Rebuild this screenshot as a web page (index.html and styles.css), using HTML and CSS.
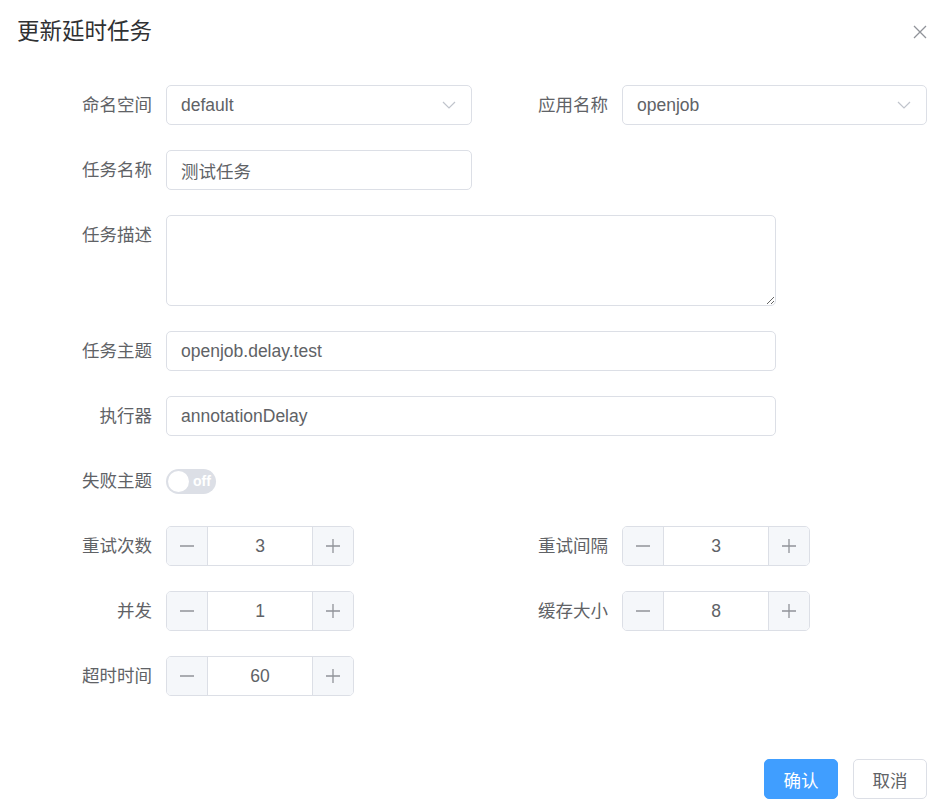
FILE: index.html
```html
<!DOCTYPE html>
<html lang="zh-CN">
<head>
<meta charset="utf-8">
<title>更新延时任务</title>
<link rel="stylesheet" href="styles.css">
</head>
<body>
<div class="dialog">
  <div class="dialog-header">
    <span class="dialog-title">更新延时任务</span>
    <button class="close-btn" aria-label="close">
      <svg width="14" height="14" viewBox="0 0 14 14"><path d="M1 1L13 13M13 1L1 13" stroke="#909399" stroke-width="1.3" fill="none"/></svg>
    </button>
  </div>
  <div class="dialog-body">
    <form class="form">
      <div class="form-item">
        <label class="label">命名空间</label>
        <div class="control select">
          <span class="value">default</span>
          <svg class="arrow" width="14" height="8" viewBox="0 0 14 8"><path d="M1 1L7 7L13 1" stroke="#c0c4cc" stroke-width="1.2" fill="none"/></svg>
        </div>
      </div>
      <div class="form-item">
        <label class="label">应用名称</label>
        <div class="control select">
          <span class="value">openjob</span>
          <svg class="arrow" width="14" height="8" viewBox="0 0 14 8"><path d="M1 1L7 7L13 1" stroke="#c0c4cc" stroke-width="1.2" fill="none"/></svg>
        </div>
      </div>

      <div class="form-item">
        <label class="label">任务名称</label>
        <div class="control"><span class="value">测试任务</span></div>
      </div>
      <div class="spacer"></div>

      <div class="form-item wide">
        <label class="label">任务描述</label>
        <textarea class="textarea"></textarea>
      </div>

      <div class="form-item wide">
        <label class="label">任务主题</label>
        <div class="control long"><span class="value">openjob.delay.test</span></div>
      </div>

      <div class="form-item wide">
        <label class="label">执行器</label>
        <div class="control long"><span class="value">annotationDelay</span></div>
      </div>

      <div class="form-item wide">
        <label class="label">失败主题</label>
        <div class="switch-wrap">
          <span class="switch"><span class="knob"></span><span class="switch-text">off</span></span>
        </div>
      </div>

      <div class="form-item">
        <label class="label">重试次数</label>
        <div class="number">
          <span class="num-btn dec"><svg width="14" height="2" viewBox="0 0 14 2"><path d="M0 1H14" stroke="#909399" stroke-width="1.3"/></svg></span>
          <span class="num-val">3</span>
          <span class="num-btn inc"><svg width="14" height="14" viewBox="0 0 14 14"><path d="M0 7H14M7 0V14" stroke="#909399" stroke-width="1.3"/></svg></span>
        </div>
      </div>
      <div class="form-item">
        <label class="label">重试间隔</label>
        <div class="number">
          <span class="num-btn dec"><svg width="14" height="2" viewBox="0 0 14 2"><path d="M0 1H14" stroke="#909399" stroke-width="1.3"/></svg></span>
          <span class="num-val">3</span>
          <span class="num-btn inc"><svg width="14" height="14" viewBox="0 0 14 14"><path d="M0 7H14M7 0V14" stroke="#909399" stroke-width="1.3"/></svg></span>
        </div>
      </div>

      <div class="form-item">
        <label class="label">并发</label>
        <div class="number">
          <span class="num-btn dec"><svg width="14" height="2" viewBox="0 0 14 2"><path d="M0 1H14" stroke="#909399" stroke-width="1.3"/></svg></span>
          <span class="num-val">1</span>
          <span class="num-btn inc"><svg width="14" height="14" viewBox="0 0 14 14"><path d="M0 7H14M7 0V14" stroke="#909399" stroke-width="1.3"/></svg></span>
        </div>
      </div>
      <div class="form-item">
        <label class="label">缓存大小</label>
        <div class="number">
          <span class="num-btn dec"><svg width="14" height="2" viewBox="0 0 14 2"><path d="M0 1H14" stroke="#909399" stroke-width="1.3"/></svg></span>
          <span class="num-val">8</span>
          <span class="num-btn inc"><svg width="14" height="14" viewBox="0 0 14 14"><path d="M0 7H14M7 0V14" stroke="#909399" stroke-width="1.3"/></svg></span>
        </div>
      </div>

      <div class="form-item last">
        <label class="label">超时时间</label>
        <div class="number">
          <span class="num-btn dec"><svg width="14" height="2" viewBox="0 0 14 2"><path d="M0 1H14" stroke="#909399" stroke-width="1.3"/></svg></span>
          <span class="num-val">60</span>
          <span class="num-btn inc"><svg width="14" height="14" viewBox="0 0 14 14"><path d="M0 7H14M7 0V14" stroke="#909399" stroke-width="1.3"/></svg></span>
        </div>
      </div>
    </form>
  </div>
  <div class="dialog-footer">
    <button class="btn primary">确认</button>
    <button class="btn">取消</button>
  </div>
</div>
</body>
</html>
```

FILE: styles.css
```css
* { box-sizing: border-box; }
html, body {
  margin: 0;
  padding: 0;
  background: #ffffff;
}
body {
  font-family: "Liberation Sans", "Noto Sans CJK SC", sans-serif;
  color: #606266;
}
.dialog {
  width: 943px;
  height: 810px;
  background: #fff;
}
.dialog-header {
  display: flex;
  justify-content: space-between;
  align-items: center;
  padding: 20px 16px 0 17px;
  height: 44px;
}
.dialog-title {
  font-size: 22.5px;
  line-height: 24px;
  color: #303133;
}
.close-btn {
  border: none;
  background: none;
  padding: 0;
  width: 14px;
  height: 14px;
  display: flex;
  cursor: pointer;
}
.dialog-body {
  padding: 41px 16px 0 41px;
}
.form {
  display: grid;
  grid-template-columns: 431px 430px;
  column-gap: 25px;
  row-gap: 25px;
}
.form-item {
  display: flex;
  align-items: flex-start;
}
.form-item.wide {
  grid-column: 1 / span 2;
}
.spacer { display: block; }
.label {
  width: 125px;
  flex: none;
  text-align: right;
  padding-right: 14px;
  font-size: 17.5px;
  line-height: 40px;
  color: #606266;
}
.control {
  position: relative;
  width: 306px;
  height: 40px;
  border: 1px solid #dcdfe6;
  border-radius: 5px;
  background: #fff;
  display: flex;
  align-items: center;
  padding: 0 15px 0 14px;
  font-size: 17.5px;
  color: #606266;
}
.control.long { width: 610px; }
.select { justify-content: space-between; }
.textarea {
  width: 610px;
  height: 91px;
  border: 1px solid #dcdfe6;
  border-radius: 5px;
  resize: vertical;
  font-family: inherit;
  font-size: 17.5px;
  padding: 6px 15px;
  margin: 0;
  display: block;
  outline: none;
}
.switch-wrap {
  height: 40px;
  display: flex;
  align-items: center;
}
.switch {
  position: relative;
  display: flex;
  align-items: center;
  width: 50px;
  height: 25px;
  border-radius: 13px;
  background: #dcdfe6;
}
.knob {
  width: 21px;
  height: 21px;
  border-radius: 50%;
  background: #fff;
  margin-left: 2px;
}
.switch-text {
  color: #fff;
  font-size: 14px;
  font-weight: bold;
  margin-left: 4px;
  line-height: 25px;
}
.number {
  width: 188px;
  height: 40px;
  border: 1px solid #dcdfe6;
  border-radius: 5px;
  display: flex;
  overflow: hidden;
  background: #fff;
}
.num-btn {
  width: 41px;
  flex: none;
  background: #f5f7fa;
  display: flex;
  align-items: center;
  justify-content: center;
}
.num-btn.dec { border-right: 1px solid #dcdfe6; }
.num-btn.inc { border-left: 1px solid #dcdfe6; }
.num-val {
  flex: 1;
  text-align: center;
  font-size: 17.5px;
  line-height: 38px;
  color: #606266;
}
.dialog-footer {
  display: flex;
  justify-content: flex-end;
  gap: 15px;
  padding: 63px 16px 0 0;
}
.btn {
  width: 74px;
  height: 40px;
  border: 1px solid #dcdfe6;
  border-radius: 5px;
  background: #fff;
  color: #606266;
  font-family: inherit;
  font-size: 17.5px;
  padding: 0;
  cursor: pointer;
}
.btn.primary {
  background: #409eff;
  border-color: #409eff;
  color: #fff;
}
```
